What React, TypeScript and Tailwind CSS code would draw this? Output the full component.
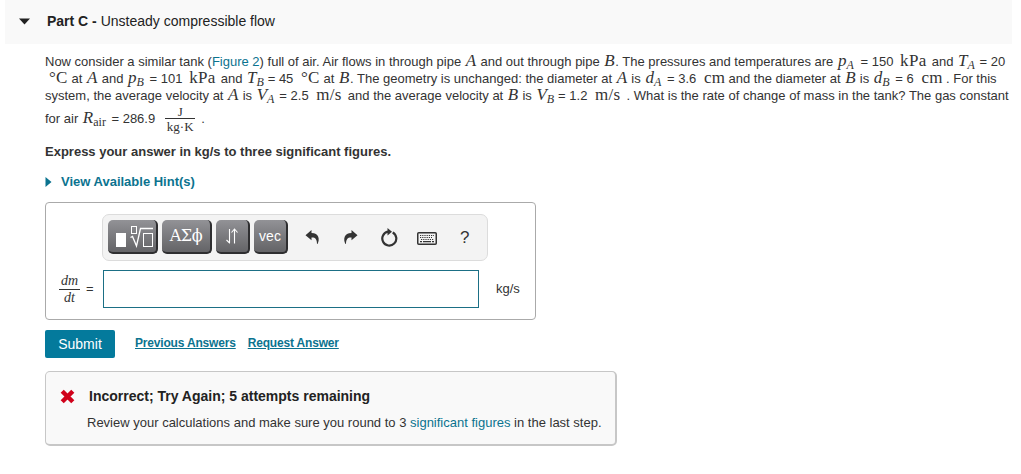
import React from 'react';

type MathProps = {
  children: React.ReactNode;
  sub?: string;
  className?: string;
  subClassName?: string;
};

// Italic variable with an optional subscript
const Var: React.FC<MathProps> = ({ children, sub, className = 'w-[11px]', subClassName = 'italic' }) => (
  <span className={`ml-px inline-block h-[17px] align-baseline font-['Liberation_Serif',serif] text-[17px] leading-[17px] ${className}`}>
    <i>{children}</i>
    {sub && <span className={`relative top-[3px] text-[12px] leading-none ${subClassName}`}>{sub}</span>}
  </span>
);

// Upright unit name
const Unit: React.FC<MathProps> = ({ children, className = '' }) => (
  <span className={`inline-block h-[17px] align-baseline font-['Liberation_Serif',serif] text-[17px] leading-[17px] tracking-[0.3px] ${className}`}>
    {children}
  </span>
);

const toolButton =
  'flex h-[34px] items-center justify-center rounded-[5px] border-r-2 border-b-2 border-[#2e2e30] bg-linear-to-b from-[#929296] to-[#646467] text-white';

const Toolbar: React.FC = () => (
  <div className="flex h-[47px] w-[386px] items-center rounded-[7px] border border-[#dcdcdc] bg-[#f3f3f3] pb-[1px] pl-[5px] text-[#333]">
    <div className="flex gap-1">
      <button className={`${toolButton} w-[50px]`}>
        <svg className="shrink-0" width="42" height="24" viewBox="0 0 42 24" fill="none" stroke="white">
          <rect x="5" y="9" width="10" height="14" fill="white" stroke="none" />
          <path d="M19.500 13.500l2-1 4 9.500 4-17.500H42" strokeWidth="1.300" />
          <rect x="20.500" y="2.500" width="5" height="7" />
          <rect x="32.500" y="9.500" width="9" height="13" />
        </svg>
      </button>
      <button className={`${toolButton} w-[50px] font-['DejaVu_Serif',serif] text-[16px] tracking-[-0.4px]`}>ΑΣϕ</button>
      <button className={`${toolButton} w-[34px]`}>
        <svg width="14" height="18" viewBox="0 0 14 18" fill="none" stroke="white" strokeWidth="1.100">
          <path d="M4.500 2v14M1.500 13l3 3H5M9.500 16.500V2M6.500 5.500l3-3.500 3 3.500" />
        </svg>
      </button>
      <button className={`${toolButton} w-[34px] text-[14px]`}>vec</button>
    </div>
    <div className="ml-[17px] flex items-center">
      <svg width="15" height="15" viewBox="0 0 15 15" fill="#333">
        <path d="M6.500 0L.500 5.200l6 5V7.500c3.500-.300 5.500 1.500 5.500 6.500h.500C15 9.500 14 3 6.500 3z" />
      </svg>
      <svg className="ml-[23px]" width="15" height="15" viewBox="0 0 15 15" fill="#333">
        <path d="M8.500 0l6 5.200-6 5V7.500C5 7.200 3 9 3 14h-.500C0 9.500 1 3 8.500 3z" />
      </svg>
      <svg className="ml-[22px]" width="18" height="19" viewBox="0 0 18 19" fill="none">
        <path d="M9 3.600a7 7 0 1 0 4.500 1.400" transform="rotate(-8 9 10.500)" stroke="#333" strokeWidth="2.200" />
        <path d="M7.500 0l4.500 3.800-4.500 3.700z" fill="#333" />
      </svg>
      <svg className="mt-[3px] ml-[19px]" width="20" height="13" viewBox="0 0 20 13" fill="none" stroke="#333">
        <rect x=".75" y=".75" width="18.500" height="11.500" rx="1" strokeWidth="1.500" />
        <path d="M3 3.500h14M3 5.500h12M4 7.500h13" strokeDasharray="1.200 1" strokeWidth="1.200" />
        <path d="M3 9.700h2M6 9.700h8M15 9.700h2" strokeWidth="1.300" />
      </svg>
      <span className="ml-[23px] text-[17px] leading-none">?</span>
    </div>
  </div>
);

const App: React.FC = () => {
  return (
    <div className="h-[474px] bg-white font-['Liberation_Sans',sans-serif] text-[13px] text-[#333]">
      {/* Part header */}
      <header className="ml-[5px] flex h-11 w-[1007px] items-center bg-[#f9f9f9] pb-[2px] pl-[14px] text-[14px] text-[#222]">
        <svg width="11" height="7" viewBox="0 0 11 7" fill="#222">
          <path d="M0 .500h11L5.500 6.500z" />
        </svg>
        <h1 className="ml-[17px] whitespace-pre">
          <b>Part C - </b>Unsteady compressible flow
        </h1>
      </header>

      <main className="pl-[45px]">
        {/* Problem statement */}
        <div className="pt-[8px] whitespace-nowrap">
          <div className="h-[17px] leading-[17px]">
            Now consider a similar tank (<a className="text-[#0b738f]">Figure 2</a>) full of air. Air flows in through pipe{' '}
            <Var>A</Var> and out through pipe <Var>B</Var>. The pressures and temperatures are <Var sub="A" className="w-[19px]">p</Var> = 150{' '}
            <Unit className="ml-[3px] w-[28px]">kPa</Unit> and <Var sub="A" className="w-[18px]">T</Var> = 20
          </div>
          <div className="h-[17px] leading-[17px]">
            <Unit className="ml-1 w-[19px]">°C</Unit> at <Var>A</Var> and <Var sub="B" className="w-[18px]">p</Var> = 101{' '}
            <Unit className="ml-[3px] w-[28px]">kPa</Unit> and <Var sub="B" className="w-[17px]">T</Var> = 45{' '}
            <Unit className="ml-1 w-[19px]">°C</Unit> at <Var>B</Var>. The geometry is unchanged: the diameter at <Var>A</Var> is{' '}
            <Var sub="A" className="w-[18px]">d</Var> = 3.6 <Unit className="ml-1 w-[21px]">cm</Unit> and the diameter at <Var>B</Var> is{' '}
            <Var sub="B" className="w-[18px]">d</Var> = 6 <Unit className="ml-1 w-[21px]">cm</Unit> . For this
          </div>
          <div className="h-[17px] leading-[17px]">
            system, the average velocity at <Var>A</Var> is <Var sub="A" className="w-[19px]">V</Var> = 2.5{' '}
            <Unit className="ml-1 w-[28px]">m/s</Unit> and the average velocity at <Var>B</Var> is{' '}
            <Var sub="B" className="w-[18px]">V</Var> = 1.2 <Unit className="ml-1 w-[28px]">m/s</Unit> . What is the rate of change of mass in the
            tank? The gas constant
          </div>
          <div className="flex h-[30px] items-center pt-[1px]">
            <span>
              for air <Var sub="air" className="w-[25px]" subClassName="not-italic">R</Var> = 286.9
            </span>
            <span className="ml-[10px] flex w-[30px] flex-col items-center font-['Liberation_Serif',serif] text-[13px] leading-[15px]">
              <span className="h-[14px]">J</span>
              <span className="w-full border-t border-[#333] text-center">kg·K</span>
            </span>
            <span className="ml-[6px]">.</span>
          </div>
        </div>

        <p className="mt-[10px] h-[18px] leading-[18px] font-bold">Express your answer in kg/s to three significant figures.</p>

        <a className="mt-3 flex h-[18px] items-center font-bold text-[#0b738f]">
          <svg width="7" height="10" viewBox="0 0 7 10" fill="#0b738f">
            <path d="M.500 0l6 5-6 5z" />
          </svg>
          <span className="ml-[9px]">View Available Hint(s)</span>
        </a>

        {/* Answer box */}
        <section className="mt-[11px] h-[118px] w-[491px] rounded-[4px] border border-[#aaa] pt-[11px] pl-[13px]">
          <div className="ml-[43px]">
            <Toolbar />
          </div>
          <div className="mt-[9px] flex h-[38px] items-center">
            <span className="flex w-[21px] flex-col items-center font-['Liberation_Serif',serif] text-[14px] leading-[14px] italic">
              <span className="h-[15px]">dm</span>
              <span className="w-full border-t border-[#333] pt-[1px] text-center">dt</span>
            </span>
            <span className="ml-[6px] w-[17px]">=</span>
            <input className="h-[38px] w-[376px] border border-[#1b6f85] bg-white outline-none" />
            <span className="ml-[17px]">kg/s</span>
          </div>
        </section>

        {/* Actions */}
        <div className="mt-[10px] flex h-7 items-center">
          <button className="h-7 w-[70px] rounded-[2px] bg-[#047a9c] text-[14px] text-white">Submit</button>
          <a className="ml-5 pb-[2px] text-[12px] font-bold tracking-[-0.18px] text-[#0b738f] underline">Previous Answers</a>
          <a className="ml-3 pb-[2px] text-[12px] font-bold tracking-[-0.18px] text-[#0b738f] underline">Request Answer</a>
        </div>

        {/* Feedback */}
        <section className="mt-[13px] h-[75px] w-[572px] rounded-[5px] border border-r-2 border-b-2 border-[#c7c7c7] bg-[#f9f9f9] pt-[15px] pl-[14px]">
          <div className="flex h-[18px] items-center text-[14px] font-bold text-[#222]">
            <svg width="15" height="15" viewBox="0 0 15 15" stroke="#d0021b" strokeWidth="4.400">
              <path d="M2.200 2.200l10.600 10.600M12.800 2.200L2.200 12.800" />
            </svg>
            <span className="ml-[14px]">Incorrect; Try Again; 5 attempts remaining</span>
          </div>
          <p className="mt-[9px] ml-[27px] leading-[18px] whitespace-nowrap">
            Review your calculations and make sure you round to 3 <a className="text-[#0b738f]">significant figures</a> in the last step.
          </p>
        </section>
      </main>
    </div>
  );
};

export default App;
